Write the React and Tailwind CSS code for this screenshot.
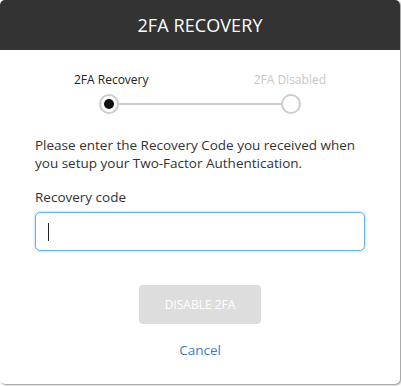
export default function App() {
  return (
    <div className="w-[401px] h-[386px] bg-white" style={{ fontFamily: '"Open Sans", sans-serif' }}>
      <div className="w-[400px] h-[384px] bg-white rounded-[5px] overflow-hidden shadow-[1px_1px_2px_rgba(0,0,0,0.45)] flex flex-col">
        {/* HEADER */}
        <div className="h-[50px] bg-[#333333] flex items-center justify-center">
          <h2 className="text-[18px] text-white tracking-[0.1px]">2FA RECOVERY</h2>
        </div>

        {/* STEPPER */}
        <div className="pt-[22px] px-[99px]">
          <div className="flex justify-between text-[12px] leading-[16px]">
            <span className="text-[#222] -ml-[25px]">2FA Recovery</span>
            <span className="text-[#c8c8c8] -mr-[25px]">2FA Disabled</span>
          </div>
          <div className="flex items-center mt-[6px]">
            <div className="w-[20px] h-[20px] rounded-full border-2 border-[#cccccc] flex items-center justify-center">
              <div className="w-[10px] h-[10px] rounded-full bg-[#111]" />
            </div>
            <div className="flex-1 h-[2px] bg-[#cccccc]" />
            <div className="w-[20px] h-[20px] rounded-full border-2 border-[#cccccc]" />
          </div>
        </div>

        {/* FORM */}
        <div className="px-[35px] pt-[22px]">
          <p className="text-[13.5px] leading-[18px] text-[#333]">
            Please enter the Recovery Code you received when you setup your Two-Factor Authentication.
          </p>
          <label className="block mt-[16px] text-[13.5px] leading-[18px] text-[#333]">Recovery code</label>
          <div className="relative mt-[6px] h-[39px] w-[330px] rounded-[5px] border border-[#66aee9] shadow-[0_0_3px_rgba(102,174,233,0.6)]">
            <div className="absolute left-[12px] top-[10px] w-[1px] h-[18px] bg-[#222]" />
          </div>
        </div>

        {/* ACCIONES */}
        <div className="flex flex-col items-center mt-[34px]">
          <button className="w-[122px] h-[39px] rounded-[4px] bg-[#dddddd] text-white text-[12px]">
            DISABLE 2FA
          </button>
          <button className="mt-[17px] text-[13.5px] leading-[18px] text-[#3b7dc4]">Cancel</button>
        </div>
      </div>
    </div>
  )
}
